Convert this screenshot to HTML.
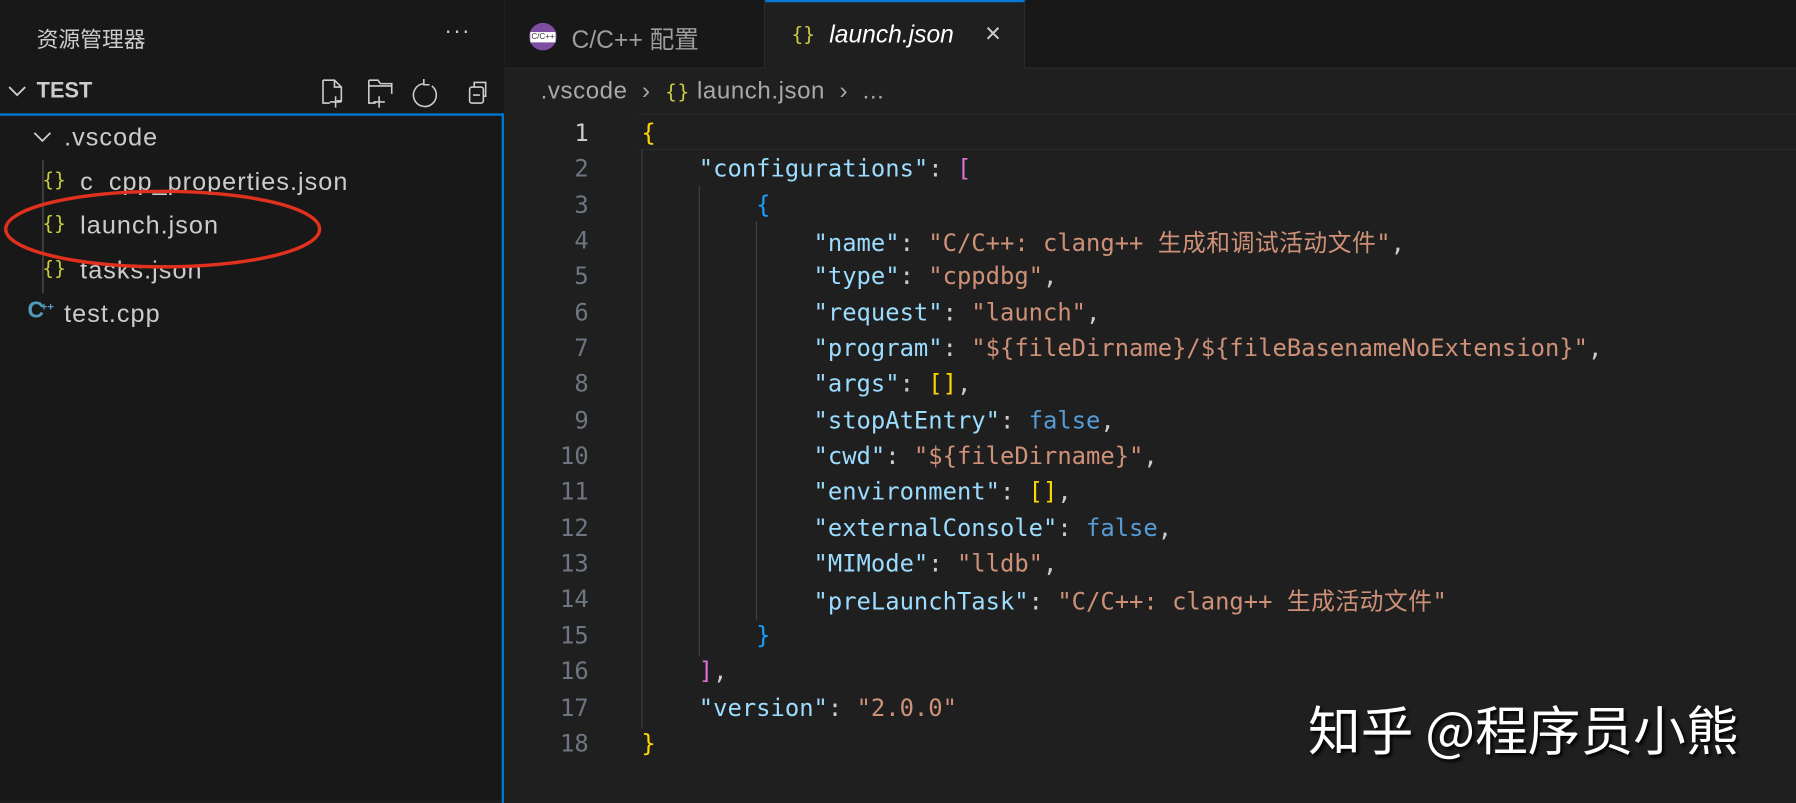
<!DOCTYPE html>
<html><head><meta charset="utf-8"><style>
html,body{margin:0;padding:0;background:#1f1f1f;overflow:hidden;width:1796px;height:800px}
#w{position:absolute;left:0;top:0;width:1568px;height:699px;transform:scale(1.14541);transform-origin:0 0;background:#1f1f1f;font-family:"Liberation Sans","Noto Sans CJK SC",sans-serif;color:#ccc}
.a{position:absolute;white-space:pre}
.side{position:absolute;left:0;top:0;width:440px;height:699px;background:#181818}
.mono{font-family:"DejaVu Sans Mono","Liberation Mono","Noto Sans CJK SC",monospace}
.code{position:absolute;left:560px;top:101px;font-size:20.8px;line-height:31.35px;letter-spacing:0}
.code div{height:31.35px;white-space:pre}
.num{position:absolute;left:460px;width:54px;top:101px;text-align:right;font-size:20.8px;line-height:31.35px;color:#6e7681}
.k{color:#9cdcfe}.s{color:#ce9178}.b{color:#569cd6}.y{color:#ffd700}.p{color:#da70d6}.bl{color:#179fff}
.cj{font-family:"Noto Sans CJK SC",sans-serif;letter-spacing:0.4px;font-size:20.8px}
.f{font-size:22px;color:#cccccc;letter-spacing:0.9px}
.yb{color:#cbcb41;font-family:"DejaVu Sans Mono",monospace;font-size:17px}
</style></head><body><div id="w">
<div class="side"></div>
<div class="a" style="left:32px;top:20px;font-size:19px;color:#ccc">资源管理器</div>
<div class="a" style="left:388px;top:16px;font-size:20px;color:#ccc;letter-spacing:1px">···</div>
<svg class="a" style="left:6px;top:72px" width="18" height="16"><path d="M2 4 L9 11 L16 4" stroke="#ccc" stroke-width="1.6" fill="none"/></svg>
<div class="a" style="left:32px;top:69px;font-size:19px;font-weight:bold;color:#ccc">TEST</div>
<svg class="a" style="left:278px;top:66px" width="160" height="30" fill="none" stroke="#ccc" stroke-width="1.4">
<path d="M4 4h10l6 6v12h-4M4 4v20h6M14 4v6h6M15 18v10M10 23h10"/>
<path d="M44 4h8l2 3h10v9M44 4v20h6M44 9h20M53 18v10M48 23h10"/>
<path d="M92 7a10 10 0 1 0 7 2M92 3v5h5"/>
<rect x="132" y="10" width="12" height="14" rx="2"/><path d="M136 10V6h10v12h-2M135 17h6"/>
</svg>
<div class="a" style="left:0;top:99px;width:438px;height:600px;border-top:2px solid #0078d4;border-right:2px solid #0078d4"></div>
<svg class="a" style="left:28px;top:112px" width="18" height="16"><path d="M2 4 L9 11 L16 4" stroke="#ccc" stroke-width="1.6" fill="none"/></svg>
<div class="a f" style="left:56px;top:107px">.vscode</div>
<div class="a" style="left:37px;top:140px;width:1px;height:116px;background:#585858"></div>
<div class="a yb" style="left:37px;top:148px">{}</div><div class="a f" style="left:70px;top:146px">c_cpp_properties.json</div>
<div class="a yb" style="left:37px;top:186px">{}</div><div class="a f" style="left:70px;top:184px">launch.json</div>
<div class="a yb" style="left:37px;top:225px">{}</div><div class="a f" style="left:70px;top:223px">tasks.json</div>
<div class="a" style="left:24px;top:260px;font-size:20px;font-weight:bold;color:#519aba">C<span style="font-size:10px;position:relative;top:-6px;left:-3px">++</span></div>
<div class="a f" style="left:56px;top:261px">test.cpp</div>
<svg class="a" style="left:0;top:162px" width="290" height="80"><ellipse cx="142" cy="38" rx="137" ry="33" stroke="#e0301e" stroke-width="3" fill="none"/></svg>
<!-- tabs -->
<div class="a" style="left:441px;top:0;width:1127px;height:59px;background:#181818;border-bottom:1px solid #2b2b2b"></div>
<div class="a" style="left:441px;top:0;width:226px;height:59px;background:#181818;border-right:1px solid #2b2b2b"></div>
<div class="a" style="left:668px;top:0;width:227px;height:60px;background:#1f1f1f;border-top:2px solid #0078d4;border-right:1px solid #2b2b2b;box-sizing:border-box"></div>
<div class="a" style="left:462px;top:20px;width:24px;height:24px;border-radius:12px;background:#7f4ea3"></div>
<div class="a" style="left:463px;top:28px;width:22px;height:9px;background:#fff;font-size:7px;color:#333;text-align:center;line-height:9px">C/C++</div>
<div class="a" style="left:499px;top:18px;font-size:21.5px;color:#9d9d9d">C/C++ 配置</div>
<div class="a yb" style="left:691px;top:21px">{}</div>
<div class="a" style="left:724px;top:18px;font-size:21.5px;font-style:italic;color:#fff">launch.json</div>
<div class="a" style="left:860px;top:16px;font-size:24px;color:#ccc">×</div>
<div class="a" style="left:472px;top:68px;font-size:21px;color:#a9a9a9;letter-spacing:0.5px">.vscode  ›  <span class="yb">{}</span> launch.json  ›  ...</div>
<!-- editor -->
<div class="a" style="left:557px;top:99px;width:1011px;height:30px;border:1px solid #2a2a2a;border-left:none"></div>
<div class="a" style="left:560px;top:131px;width:1px;height:505px;background:#404040"></div>
<div class="a" style="left:610px;top:162px;width:1px;height:411px;background:#404040"></div>
<div class="a" style="left:660px;top:193px;width:1px;height:348px;background:#404040"></div>
<div class="num mono"><div style="color:#ccc">1</div>2<br>3<br>4<br>5<br>6<br>7<br>8<br>9<br>10<br>11<br>12<br>13<br>14<br>15<br>16<br>17<br>18</div>
<div class="code mono">
<div><span class="y">{</span></div>
<div>    <span class="k">"configurations"</span>: <span class="p">[</span></div>
<div>        <span class="bl">{</span></div>
<div>            <span class="k">"name"</span>: <span class="s">"C/C++: clang++ <span class="cj">生成和调试活动文件</span>"</span>,</div>
<div>            <span class="k">"type"</span>: <span class="s">"cppdbg"</span>,</div>
<div>            <span class="k">"request"</span>: <span class="s">"launch"</span>,</div>
<div>            <span class="k">"program"</span>: <span class="s">"${fileDirname}/${fileBasenameNoExtension}"</span>,</div>
<div>            <span class="k">"args"</span>: <span class="y">[]</span>,</div>
<div>            <span class="k">"stopAtEntry"</span>: <span class="b">false</span>,</div>
<div>            <span class="k">"cwd"</span>: <span class="s">"${fileDirname}"</span>,</div>
<div>            <span class="k">"environment"</span>: <span class="y">[]</span>,</div>
<div>            <span class="k">"externalConsole"</span>: <span class="b">false</span>,</div>
<div>            <span class="k">"MIMode"</span>: <span class="s">"lldb"</span>,</div>
<div>            <span class="k">"preLaunchTask"</span>: <span class="s">"C/C++: clang++ <span class="cj">生成活动文件</span>"</span></div>
<div>        <span class="bl">}</span></div>
<div>    <span class="p">]</span>,</div>
<div>    <span class="k">"version"</span>: <span class="s">"2.0.0"</span></div>
<div><span class="y">}</span></div>
</div>
<div class="a" style="left:1142px;top:603px;font-size:46px;color:#fff;font-family:'Noto Sans CJK SC',sans-serif;text-shadow:2px 2px 3px #000">知乎 @程序员小熊</div>
</div></body></html>
